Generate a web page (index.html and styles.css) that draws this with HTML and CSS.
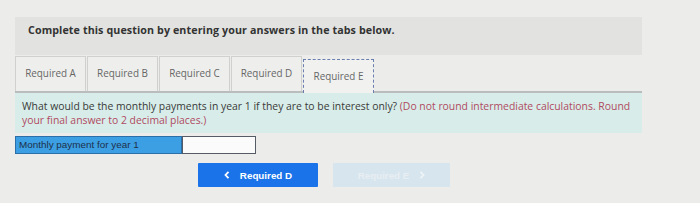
FILE: index.html
```html
<!DOCTYPE html>
<html>
<head>
<meta charset="utf-8">
<link rel="stylesheet" href="styles.css">
</head>
<body>
<div class="page">
  <div class="header">Complete this question by entering your answers in the tabs below.</div>
  <div class="tabs">
    <div class="tab">Required A</div>
    <div class="tab">Required B</div>
    <div class="tab">Required C</div>
    <div class="tab">Required D</div>
    <div class="tab active">Required E</div>
  </div>
  <div class="question">What would be the monthly payments in year 1 if they are to be interest only? <span class="note">(Do not round intermediate calculations. Round</span> <span class="note">your final answer to 2 decimal places.)</span></div>
  <div class="answer-row">
    <div class="label">Monthly payment for year 1</div>
    <div class="input"></div>
  </div>
  <div class="nav">
    <div class="btn prev"><svg class="chev" width="6" height="8" viewBox="0 0 6 8"><polyline points="4.5,0.8 1.5,4 4.5,7.2" fill="none" stroke="#fff" stroke-width="1.8"/></svg>Required D</div>
    <div class="btn next">Required E<svg class="chev right" width="6" height="8" viewBox="0 0 6 8"><polyline points="1.5,0.8 4.5,4 1.5,7.2" fill="none" stroke="#eef3f6" stroke-width="1.8"/></svg></div>
  </div>
</div>
</body>
</html>
```
FILE: styles.css
```css
html, body {
  margin: 0;
  padding: 0;
  background: #ecedeb;
  width: 700px;
  height: 203px;
  overflow: hidden;
}
.page {
  padding: 17px 0 0 15px;
  width: 627px;
  font-family: "Open Sans", "DejaVu Sans", sans-serif;
}
.header {
  background: #e2e3e1;
  height: 38px;
  box-sizing: border-box;
  padding: 6px 0 0 13px;
  font-size: 10.7px;
  font-weight: 700;
  color: #333;
  letter-spacing: 0.1px;
}
.tabs {
  display: flex;
  height: 35px;
  border-bottom: 2px solid #b9bdbd;
  margin-top: 1px;
}
.tab {
  box-sizing: border-box;
  width: 71px;
  margin-right: 1px;
  border: 1px solid #d0d0ce;
  border-bottom: none;
  background: #eeefed;
  font-size: 9.9px;
  color: #666;
  display: flex;
  align-items: center;
  justify-content: center;
  padding-bottom: 2px;
}
.tab.active {
  border: 1px dashed #6a7fb0;
  border-bottom: none;
  background: #f1f2f0;
  margin-top: 3px;
  height: 34px;
}
.question {
  background: #d8ede9;
  height: 40px;
  box-sizing: border-box;
  padding: 6px 5px 0 7px;
  font-size: 10.4px;
  line-height: 14px;
  color: #3a3a3a;
}
.note {
  color: #b04a62;
}
.answer-row {
  display: flex;
  margin-top: 3px;
  height: 18px;
}
.label {
  box-sizing: border-box;
  width: 167px;
  background: #3d9fe3;
  border: 1px solid #2c6fa8;
  font-family: "Liberation Sans", Arial, sans-serif;
  font-size: 9.9px;
  color: #1c2f4a;
  padding: 2px 0 0 3px;
}
.input {
  box-sizing: border-box;
  width: 74px;
  background: #fbfbfb;
  border: 1px solid #555c66;
}
.nav {
  display: flex;
  margin-top: 9px;
  padding-left: 183px;
  gap: 15px;
}
.btn {
  box-sizing: border-box;
  height: 24px;
  display: flex;
  align-items: center;
  justify-content: center;
  font-family: "Liberation Sans", Arial, sans-serif;
  font-size: 9.8px;
  font-weight: 700;
}
.prev {
  width: 120px;
  background: #1a73e8;
  color: #fff;
  border-radius: 1px;
}
.next {
  width: 117px;
  background: #d7e5ee;
  color: #e8eef2;
}
.chev {
  margin-right: 10px;
}
.chev.right {
  margin: 0 0 0 10px;
}
```
